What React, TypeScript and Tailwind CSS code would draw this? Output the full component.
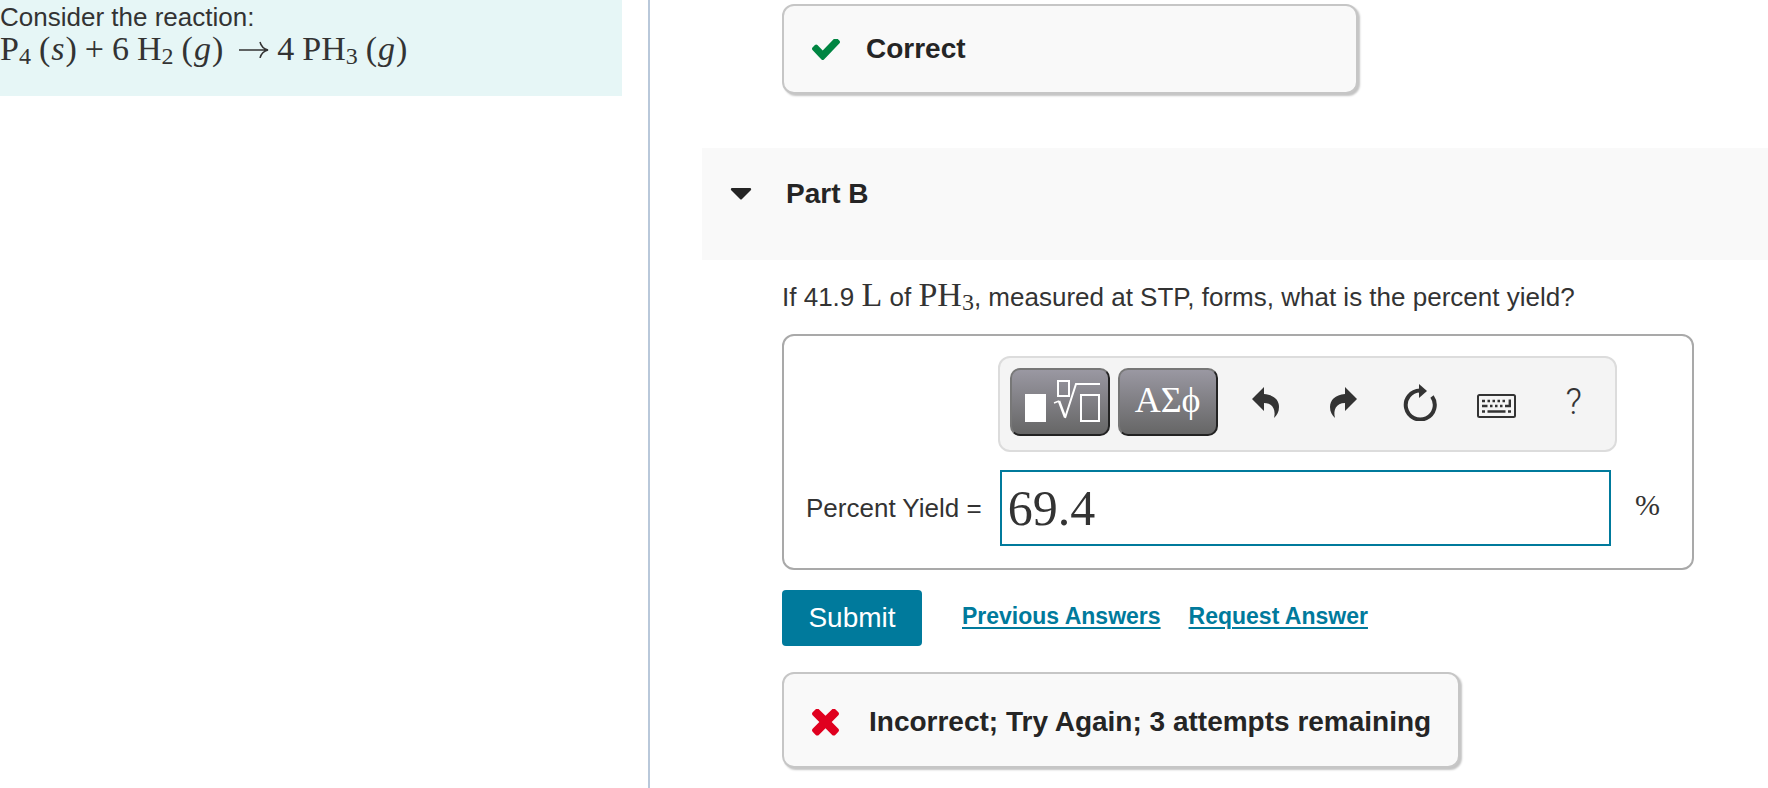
import { useState } from "react"
import type { ReactNode } from "react"

function Sub({ children }: { children: ReactNode }) {
    return <sub className="relative top-1 align-baseline text-2xl leading-none">{children}</sub>
}

function Phase({ children }: { children: ReactNode }) {
    return (
        <span className="flex items-baseline gap-px">
            <span>(</span>
            <i>{children}</i>
            <span>)</span>
        </span>
    )
}

function Arrow() {
    return (
        <svg className="ml-2 self-center" width="30" height="18" viewBox="0 0 30 18" fill="none" stroke="currentColor" strokeWidth="1.5" aria-label="yields">
            <path d="M0 10H28M21 2C22 6 25 9 29 10C25 11 22 14 21 18" />
        </svg>
    )
}

function CheckIcon() {
    return (
        <svg width="28" height="21" viewBox="121 406 1550 1116" preserveAspectRatio="none" fill="#008542" aria-hidden="true">
            <path d="M1671 566q0 40-28 68l-724 724-136 136q-28 28-68 28t-68-28l-136-136-362-362q-28-28-28-68t28-68l136-136q28-28 68-28t68 28l294 295 656-657q28-28 68-28t68 28l136 136q28 28 28 68z" />
        </svg>
    )
}

function CrossIcon() {
    return (
        <svg width="27" height="27" viewBox="302 386 1188 1188" fill="#e0001f" aria-hidden="true">
            <path d="M1490 1322q0 40-28 68l-136 136q-28 28-68 28t-68-28l-294-294-294 294q-28 28-68 28t-68-28l-136-136q-28-28-28-68t28-68l294-294-294-294q-28-28-28-68t28-68l136-136q28-28 68-28t68 28l294 294 294-294q28-28 68-28t68 28l136 136q28 28 28 68t-28 68l-294 294 294 294q28 28 28 68z" />
        </svg>
    )
}

function TemplateIcon() {
    return (
        <svg width="96" height="64" viewBox="0 0 96 64" fill="none" stroke="white" aria-hidden="true">
            <rect x="13" y="24" width="21" height="28" fill="white" stroke="none" />
            <rect x="46" y="11" width="11" height="15" strokeWidth="2" />
            <path d="M42 33l5-2" strokeWidth="1.5" />
            <path d="M47 31l6 16" strokeWidth="2.5" />
            <path d="M53 48L64 14H88" strokeWidth="2" />
            <rect x="69" y="25" width="18" height="26" strokeWidth="2" />
        </svg>
    )
}

function UndoIcon() {
    return (
        <svg width="28" height="31" viewBox="0 0 28 31" fill="currentColor" aria-hidden="true">
            <path d="M0 12L12 0V7C22 8 27 13 27 20C27 25 25 28 22 31C24 23 21 16 12 16V24Z" />
        </svg>
    )
}

function RedoIcon() {
    return (
        <svg width="28" height="31" viewBox="0 0 28 31" fill="currentColor" aria-hidden="true">
            <path d="M28 12L16 0V7C6 8 1 13 1 20C1 25 3 28 6 31C4 23 7 16 16 16V24Z" />
        </svg>
    )
}

function ResetIcon() {
    return (
        <svg width="34" height="37" viewBox="0 0 34 37" aria-hidden="true">
            <path d="M17 6.5A14.5 14.5 0 1 0 29 12.5" fill="none" stroke="currentColor" strokeWidth="4" />
            <path d="M16 0L24 7L16 14Z" fill="currentColor" />
        </svg>
    )
}

function KeyboardIcon() {
    return (
        <svg width="40" height="24" viewBox="0 0 40 24" aria-hidden="true">
            <rect x="1" y="1" width="37" height="22" rx="1.5" fill="none" stroke="currentColor" strokeWidth="2" />
            <g stroke="currentColor" strokeWidth="2.4" fill="none">
                <path d="M5 7H8M10.5 7H13M15.5 7H18M20.5 7H23M25.5 7H28M5 12H10.5M13 12H15.5M18 12H20.5M23 12H25.5M28 12H34M5 17.5H8M10.5 17.5H28.5M31 17.5H34" />
                <path d="M32.8 5.5V13" />
            </g>
        </svg>
    )
}

const mathButton = "flex h-[68px] w-[100px] items-center justify-center rounded-[10px] border-2 border-t-[#777] border-l-[#777] border-r-[#222] border-b-[#222] bg-linear-to-b from-[#9a98a2] to-[#666] text-white"
const toolButton = "flex h-11 w-11 items-center justify-center text-[#333]"
const card = "flex max-w-full items-center rounded-xl border-2 border-[#c6c6c6] bg-[#f9f9f9] text-[28px] leading-8 font-bold text-[#252525] shadow-[2px_2px_2px_#c4c4c4]"
const link = "text-[23px] font-bold text-[#007a9c] underline decoration-2 underline-offset-3"
const serif = "font-['Liberation_Serif',serif]"

export default function App() {
    const [answer, setAnswer] = useState("69.4")
    const [open, setOpen] = useState(true)

    return (
        <div className="flex min-h-screen bg-white font-['Liberation_Sans',Arial,sans-serif] text-[26px] leading-8 text-[#333]">
            <aside className="w-[650px] shrink-0 border-r-2 border-[#b9c8da] pr-[26px]">
                <div className="h-24 bg-[#e6f6f6]">
                    <p className="pt-px">Consider the reaction:</p>
                    <div className={`flex items-baseline gap-2 text-[34px] leading-8 ${serif}`}>
                        <span>P<Sub>4</Sub></span>
                        <Phase>s</Phase>
                        <span>+</span>
                        <span>6</span>
                        <span>H<Sub>2</Sub></span>
                        <Phase>g</Phase>
                        <Arrow />
                        <span>4</span>
                        <span>PH<Sub>3</Sub></span>
                        <Phase>g</Phase>
                    </div>
                </div>
            </aside>

            <main className="min-w-0 flex-1 pt-1 pl-[52px]">
                <div className="pl-20">
                    <div className={`${card} h-[90px] w-[576px] gap-[26px] px-7`}>
                        <CheckIcon />
                        <span>Correct</span>
                    </div>
                </div>

                <div className="mt-[54px] h-28 bg-[#f9f9f9] pt-[30px] pl-7">
                    <button type="button" aria-expanded={open} onClick={() => setOpen(!open)} className="flex items-center gap-[34px] text-[28px] leading-8 font-bold text-[#252525]">
                        <svg width="22" height="12" viewBox="0 0 22 12" fill="currentColor" aria-hidden="true">
                            <path d="M1.5 0H20.5Q22 1 20.5 2.5L12 11Q11 12 10 11L1.5 2.5Q0 1 1.5 0Z" />
                        </svg>
                        Part B
                    </button>
                </div>

                {open &&
                    <form className="pt-[17px] pr-[74px] pl-20" onSubmit={(e) => e.preventDefault()}>
                        <p className="leading-9">
                            If 41.9 <span className={`text-[34px] ${serif}`}>L</span> of{" "}
                            <span className={`text-[34px] ${serif}`}>PH<Sub>3</Sub></span>, measured at STP, forms, what is the percent yield?
                        </p>

                        <div className="mt-[19px] grid grid-cols-[auto_1fr_auto] items-center gap-y-[18px] rounded-xl border-2 border-[#a9a9a9] pt-5 pr-8 pb-[22px] pl-[22px]">
                            <div className="col-start-2 -mr-1.5 -ml-0.5 flex h-24 items-center rounded-xl border-2 border-[#dcdcdc] bg-[#f4f4f4] pb-1 pl-[10px]">
                                <button type="button" className={mathButton} aria-label="Templates">
                                    <TemplateIcon />
                                </button>
                                <button type="button" className={`${mathButton} ml-2 pb-1 text-4xl ${serif}`}>ΑΣϕ</button>
                                <div className="ml-[26px] flex gap-[33px]">
                                    <button type="button" className={toolButton} aria-label="Undo"><UndoIcon /></button>
                                    <button type="button" className={toolButton} aria-label="Redo"><RedoIcon /></button>
                                    <button type="button" className={toolButton} aria-label="Reset"><ResetIcon /></button>
                                    <button type="button" className={`${toolButton} pt-2`} aria-label="Keyboard"><KeyboardIcon /></button>
                                    <button type="button" className={`${toolButton} font-[Roboto,sans-serif] text-4xl font-light`} aria-label="Help">?</button>
                                </div>
                            </div>
                            <label htmlFor="answer" className="col-start-1 pr-[18px]">Percent Yield =</label>
                            <input
                                id="answer"
                                value={answer}
                                onChange={(e) => setAnswer(e.target.value)}
                                className={`h-[76px] w-full min-w-0 border-2 border-[#007a9c] bg-white px-1.5 text-[50px] outline-none ${serif}`}
                            />
                            <span className={`pb-1.5 pl-6 text-[30px] ${serif}`}>%</span>
                        </div>

                        <div className="mt-5 flex items-center">
                            <button type="submit" className="h-14 w-[140px] rounded bg-[#007a9c] text-[28px] text-white">Submit</button>
                            <div className="ml-10 flex gap-7 pb-1">
                                <a href="#previous" className={link}>Previous Answers</a>
                                <a href="#request" className={link}>Request Answer</a>
                            </div>
                        </div>

                        <div className={`${card} mt-[26px] h-24 w-fit gap-[30px] pt-1 pr-[27px] pl-7`}>
                            <CrossIcon />
                            <span>Incorrect; Try Again; 3 attempts remaining</span>
                        </div>
                    </form>
                }
            </main>
        </div>
    )
}
